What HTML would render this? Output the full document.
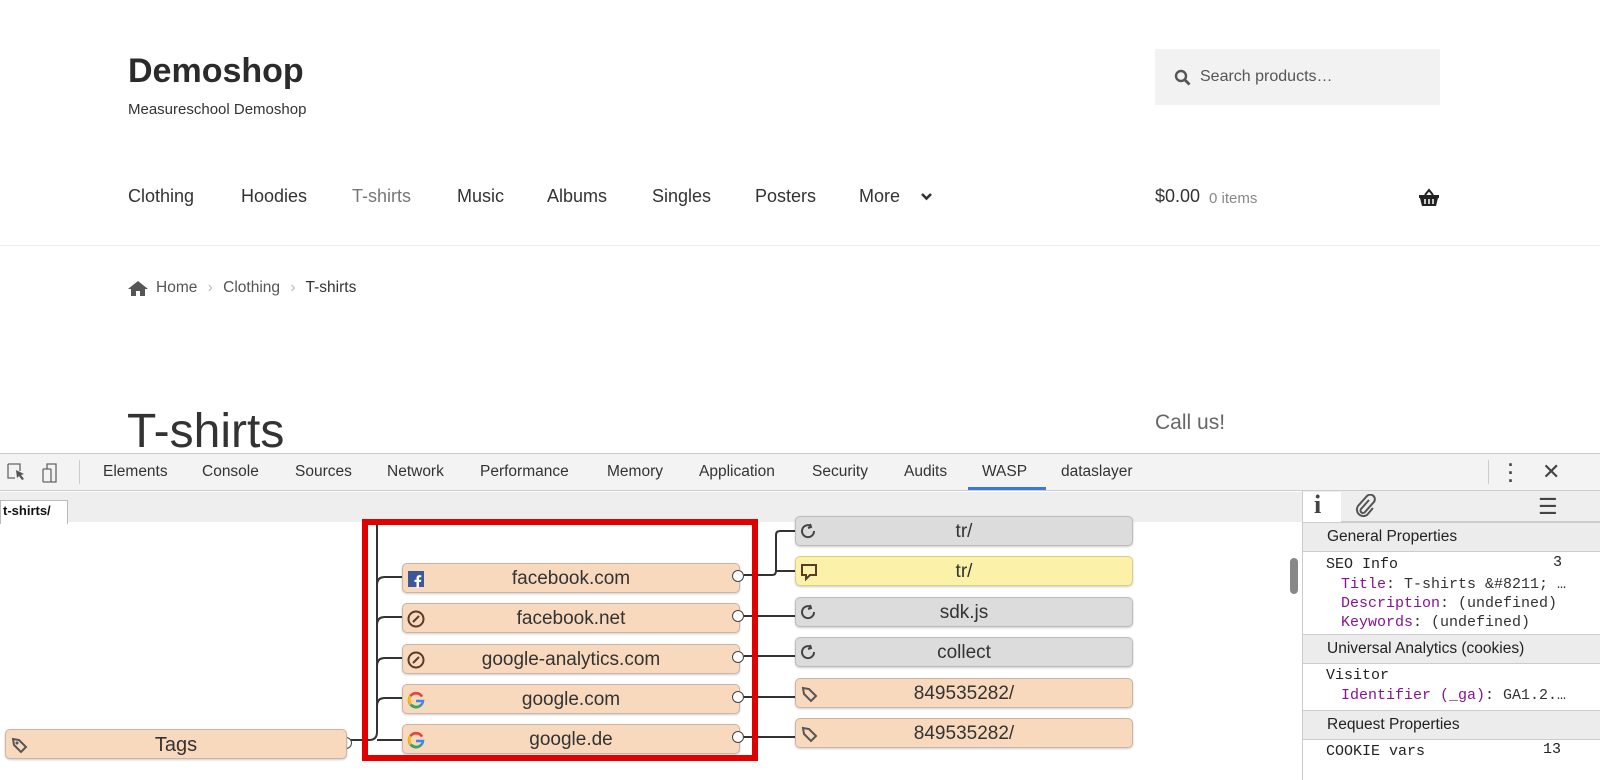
<!DOCTYPE html>
<html><head><meta charset="utf-8"><style>
*{margin:0;padding:0;box-sizing:border-box}
body{width:1600px;height:780px;overflow:hidden;background:#fff;font-family:"Liberation Sans",sans-serif;position:relative;color:#333}
.a{position:absolute;white-space:nowrap}
.nav{top:186px;font-size:18px;color:#333}
.tab{top:463px;font-size:15.5px;color:#333}
.box{position:absolute;height:30px;border:1px solid #c9b5a5;border-radius:5px;background:#f9d9bd;font-size:19px;color:#333;text-align:center;line-height:30px;box-shadow:0 1px 2px rgba(0,0,0,.2)}
.g{background:#dcdcdc;border-color:#bbb}
.y{background:#fbf1a9;border-color:#d8cf8a}
.c{position:absolute;width:12px;height:12px;border:1.5px solid #444;border-radius:50%;background:#fff}
.ic{position:absolute;left:4px;top:6px;width:18px;height:18px}
.mono{font-family:"Liberation Mono",monospace;font-size:15px}
.sec{position:absolute;left:1303px;width:297px;height:30px;background:#ececec;border-top:1px solid #ccc;border-bottom:1px solid #ccc;font-size:15.5px;line-height:28px;padding-left:24px;color:#222}
</style></head><body>
<div class="a" style="left:128px;top:52px;font-size:34px;font-weight:bold;color:#2b2b2b">Demoshop</div>
<div class="a" style="left:128px;top:101px;font-size:15px;color:#333">Measureschool Demoshop</div>
<div class="a" style="left:1155px;top:49px;width:285px;height:56px;background:#f2f2f2"></div>
<svg class="a" style="left:1174px;top:69px" width="17" height="17" viewBox="0 0 17 17"><circle cx="7" cy="7" r="5" fill="none" stroke="#555" stroke-width="2.4"/><path d="M11 11l4.5 4.5" stroke="#555" stroke-width="2.8"/></svg>
<div class="a" style="left:1200px;top:68px;font-size:16px;color:#555">Search products…</div>
<div class="a nav" style="left:128px">Clothing</div>
<div class="a nav" style="left:241px">Hoodies</div>
<div class="a nav" style="left:352px;color:#777">T-shirts</div>
<div class="a nav" style="left:457px">Music</div>
<div class="a nav" style="left:547px">Albums</div>
<div class="a nav" style="left:652px">Singles</div>
<div class="a nav" style="left:755px">Posters</div>
<div class="a nav" style="left:859px">More</div>
<svg class="a" style="left:920px;top:192px" width="13" height="10"><path d="M2 2l4.5 4.5L11 2" fill="none" stroke="#333" stroke-width="2.6"/></svg>
<div class="a nav" style="left:1155px">$0.00</div>
<div class="a" style="left:1209px;top:190px;font-size:15px;color:#888">0 items</div>
<svg class="a" style="left:1418px;top:188px" width="22" height="19" viewBox="0 0 22 19"><path d="M7 7l4-5 4 5" fill="none" stroke="#222" stroke-width="2"/><path d="M1 7h20v3h-1l-2 8H4L2 10H1z" fill="#222"/><path d="M7 11v5M11 11v5M15 11v5" stroke="#fff" stroke-width="1.5"/></svg>
<div class="a" style="left:0;top:245px;width:1600px;height:1px;background:#eee"></div>
<svg class="a" style="left:128px;top:280px" width="20" height="16" viewBox="0 0 20 16"><path d="M10 1L0 9h3v7h5v-5h4v5h5V9h3z" fill="#555"/></svg>
<div class="a" style="left:156px;top:279px;font-size:15.5px;color:#555">Home <span style="color:#bbb;margin:0 6px">›</span> Clothing <span style="color:#bbb;margin:0 6px">›</span> <span style="color:#333">T-shirts</span></div>
<div class="a" style="left:127px;top:404px;font-size:48px;font-weight:300;color:#333">T-shirts</div>
<div class="a" style="left:1155px;top:411px;font-size:21px;color:#666">Call us!</div>

<div class="a" style="left:0;top:453px;width:1600px;height:327px;background:#fff;border-top:1px solid #ccc"></div>
<div class="a" style="left:0;top:454px;width:1600px;height:37px;background:#f3f3f3;border-bottom:1px solid #ccc"></div>
<svg class="a" style="left:6px;top:462px" width="60" height="22"><path d="M2 2h12v7M2 2v14h7" fill="none" stroke="#666" stroke-width="1.3"/><path d="M10 8l8 4-3 1 3 4-2 1-3-4-2 2z" fill="#555"/><rect x="37" y="7" width="8" height="13" rx="1" fill="none" stroke="#666" stroke-width="1.3"/><path d="M41 7V2h9v18h-5" fill="none" stroke="#666" stroke-width="1.3"/></svg>
<div class="a" style="left:79px;top:460px;width:1px;height:24px;background:#ccc"></div>
<div class="a tab" style="left:103px">Elements</div>
<div class="a tab" style="left:202px">Console</div>
<div class="a tab" style="left:295px">Sources</div>
<div class="a tab" style="left:387px">Network</div>
<div class="a tab" style="left:480px">Performance</div>
<div class="a tab" style="left:607px">Memory</div>
<div class="a tab" style="left:699px">Application</div>
<div class="a tab" style="left:812px">Security</div>
<div class="a tab" style="left:904px">Audits</div>
<div class="a tab" style="left:982px">WASP</div>
<div class="a" style="left:968px;top:487px;width:78px;height:3px;background:#3b78d8"></div>
<div class="a tab" style="left:1061px">dataslayer</div>
<div class="a" style="left:1488px;top:460px;width:1px;height:24px;background:#ccc"></div>
<div class="a" style="left:1508px;top:461px;font-size:18px;font-weight:bold;color:#444;line-height:8px">·<br>·<br>·</div>
<div class="a" style="left:1542px;top:459px;font-size:22px;color:#444">✕</div>
<div class="a" style="left:0;top:492px;width:1302px;height:30px;background:#eee"></div>
<div class="a" style="left:0;top:500px;width:68px;height:24px;background:#fff;border:1px solid #bbb;border-bottom:none;font-size:13px;font-weight:bold;padding:2px 2px;color:#111">t-shirts/</div>

<svg class="a" style="left:0;top:520px" width="1300" height="260">
<g fill="none" stroke="#333" stroke-width="2">
<path d="M377 0V212q0 8-8 8H350"/>
<path d="M377 65q0-8 8-8h17M377 105q0-8 8-8h17M377 146q0-8 8-8h17M377 186q0-8 8-8h17M377 220h25"/>
<path d="M744 55h28q4 0 4-4V15q0-4 4-4h15M776 51h19"/>
<path d="M744 96h51M744 136h51M744 177h51M744 217h51"/>
</g></svg>
<div class="c" style="left:340px;top:737px"></div>

<div class="box" style="left:5px;top:729px;width:342px;font-size:20px">Tags<svg class="ic" viewBox="0 0 18 18"><path d="M3 3l6 1 7 7-5 5-7-7z" fill="none" stroke="#555" stroke-width="2"/><circle cx="7" cy="7" r="1.5" fill="#555"/></svg></div>

<div class="box" style="left:402px;top:563px;width:338px">facebook.com<svg class="ic" viewBox="0 0 18 18"><rect x="1" y="1" width="16" height="16" fill="#3b5998"/><path d="M12 18v-6h2l.3-2.3H12V8.3c0-.7.2-1.1 1.1-1.1h1.2v-2a15 15 0 0 0-1.8-.1c-1.8 0-3 1.1-3 3v1.7H7.5V12h2v6z" fill="#fff"/></svg></div>
<div class="box" style="left:402px;top:603px;width:338px">facebook.net<svg class="ic" viewBox="0 0 18 18"><circle cx="9" cy="9" r="7.5" fill="none" stroke="#5a3a2a" stroke-width="2"/><path d="M6 12l6-6" stroke="#5a3a2a" stroke-width="2"/></svg></div>
<div class="box" style="left:402px;top:644px;width:338px">google-analytics.com<svg class="ic" viewBox="0 0 18 18"><circle cx="9" cy="9" r="7.5" fill="none" stroke="#5a3a2a" stroke-width="2"/><path d="M6 12l6-6" stroke="#5a3a2a" stroke-width="2"/></svg></div>
<div class="box" style="left:402px;top:684px;width:338px">google.com<svg class="ic" viewBox="0 0 18 18"><path d="M15 5.5A7 7 0 1 0 16 10H9" fill="none" stroke="#4285f4" stroke-width="2.5"/><path d="M15 5.5A7 7 0 0 0 3.5 5" fill="none" stroke="#ea4335" stroke-width="2.5"/><path d="M3.5 5A7 7 0 0 0 4 13.5" fill="none" stroke="#fbbc05" stroke-width="2.5"/><path d="M4 13.5A7 7 0 0 0 14 14" fill="none" stroke="#34a853" stroke-width="2.5"/></svg></div>
<div class="box" style="left:402px;top:724px;width:338px">google.de<svg class="ic" viewBox="0 0 18 18"><path d="M15 5.5A7 7 0 1 0 16 10H9" fill="none" stroke="#4285f4" stroke-width="2.5"/><path d="M15 5.5A7 7 0 0 0 3.5 5" fill="none" stroke="#ea4335" stroke-width="2.5"/><path d="M3.5 5A7 7 0 0 0 4 13.5" fill="none" stroke="#fbbc05" stroke-width="2.5"/><path d="M4 13.5A7 7 0 0 0 14 14" fill="none" stroke="#34a853" stroke-width="2.5"/></svg></div>
<div class="c" style="left:732px;top:570px"></div><div class="c" style="left:732px;top:610px"></div><div class="c" style="left:732px;top:651px"></div><div class="c" style="left:732px;top:691px"></div><div class="c" style="left:732px;top:731px"></div>

<div class="box g" style="left:795px;top:516px;width:338px">tr/<svg class="ic" viewBox="0 0 18 18"><path d="M14 8a6 6 0 1 1-4-5.5M10 1l1 3-3 1" fill="none" stroke="#444" stroke-width="2"/></svg></div>
<div class="box y" style="left:795px;top:556px;width:338px">tr/<svg class="ic" viewBox="0 0 18 18"><path d="M2 2h14v10h-6l-4 4v-4H2z" fill="none" stroke="#5a3a2a" stroke-width="2"/></svg></div>
<div class="box g" style="left:795px;top:597px;width:338px">sdk.js<svg class="ic" viewBox="0 0 18 18"><path d="M14 8a6 6 0 1 1-4-5.5M10 1l1 3-3 1" fill="none" stroke="#444" stroke-width="2"/></svg></div>
<div class="box g" style="left:795px;top:637px;width:338px">collect<svg class="ic" viewBox="0 0 18 18"><path d="M14 8a6 6 0 1 1-4-5.5M10 1l1 3-3 1" fill="none" stroke="#444" stroke-width="2"/></svg></div>
<div class="box" style="left:795px;top:678px;width:338px">849535282/<svg class="ic" viewBox="0 0 18 18"><path d="M3 3l6 1 7 7-5 5-7-7z" fill="none" stroke="#555" stroke-width="2"/></svg></div>
<div class="box" style="left:795px;top:718px;width:338px">849535282/<svg class="ic" viewBox="0 0 18 18"><path d="M3 3l6 1 7 7-5 5-7-7z" fill="none" stroke="#555" stroke-width="2"/></svg></div>

<div class="a" style="left:362px;top:519px;width:396px;height:242px;border:6px solid #e00000"></div>
<div class="a" style="left:1290px;top:558px;width:8px;height:36px;border-radius:4px;background:#888"></div>

<div class="a" style="left:1302px;top:491px;width:298px;height:289px;background:#fff;border-left:1px solid #ccc"></div>
<div class="a" style="left:1303px;top:491px;width:297px;height:31px;background:#eee;border-bottom:1px solid #ccc"></div>
<div class="a" style="left:1303px;top:492px;width:38px;height:30px;background:#fff"></div>
<div class="a" style="left:1314px;top:490px;font-size:26px;font-weight:bold;font-family:'Liberation Serif',serif;color:#444">i</div>
<svg class="a" style="left:1354px;top:494px" width="22" height="24" viewBox="0 0 22 24"><path d="M15 6l-8 9a2.5 2.5 0 0 0 3.5 3.5l9-10a4.5 4.5 0 0 0-6.5-6.5l-9 10a6.5 6.5 0 0 0 9 9l6-7" fill="none" stroke="#555" stroke-width="2"/></svg>
<div class="a" style="left:1538px;top:494px;font-size:22px;color:#444">☰</div>
<div class="sec" style="top:522px">General Properties</div>
<div class="a mono" style="left:1326px;top:556px;color:#222">SEO Info</div>
<div class="a mono" style="left:1553px;top:554px;color:#222">3</div>
<div class="a mono" style="left:1341px;top:576px"><span style="color:#881391">Title</span>: T-shirts &amp;#8211; …</div>
<div class="a mono" style="left:1341px;top:595px"><span style="color:#881391">Description</span>: (undefined)</div>
<div class="a mono" style="left:1341px;top:614px"><span style="color:#881391">Keywords</span>: (undefined)</div>
<div class="sec" style="top:634px">Universal Analytics (cookies)</div>
<div class="a mono" style="left:1326px;top:667px;color:#222">Visitor</div>
<div class="a mono" style="left:1341px;top:687px"><span style="color:#881391">Identifier (_ga)</span>: GA1.2.…</div>
<div class="sec" style="top:710px">Request Properties</div>
<div class="a mono" style="left:1326px;top:743px;color:#222">COOKIE vars</div>
<div class="a mono" style="left:1543px;top:741px;color:#222">13</div>
</body></html>
